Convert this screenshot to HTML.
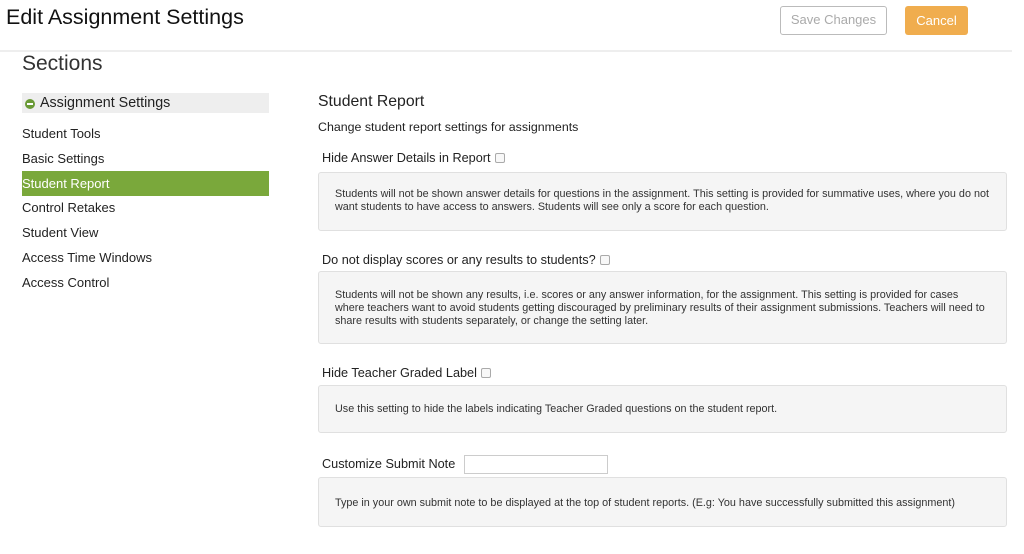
<!DOCTYPE html>
<html><head><style>
*{margin:0;padding:0;box-sizing:border-box}
body{width:1024px;height:554px;background:#fff;font-family:"Liberation Sans",sans-serif;color:#222;position:relative;overflow:hidden}
.a{position:absolute}
h1{position:absolute;left:6px;top:5px;font-size:21.5px;font-weight:normal;color:#111}
.hr{left:0;top:50px;width:1012px;height:2px;background:#eee}
.btn{border-radius:3px;font-size:13px;text-align:center;line-height:26px}
.nav{left:22px;font-size:13px;color:#222}
.box{left:318px;width:689px;background:#f5f5f5;border:1px solid #e0e0e0;border-radius:3px;font-size:10.8px;line-height:13px;color:#333;padding:0 16px}
.lbl{left:322px;font-size:12.7px;color:#222}
.cb{display:inline-block;width:10px;height:10px;border:1px solid #aaa;border-radius:2px;background:#f8f8f8;vertical-align:-1px;margin-left:4px}
</style></head><body>
<h1>Edit Assignment Settings</h1>
<div class="a btn" style="left:780px;top:6px;width:107px;height:29px;border:1px solid #bbb;color:#aaa">Save Changes</div>
<div class="a btn" style="left:905px;top:6px;width:63px;height:29px;background:#f0ad4e;color:#fff;line-height:29px">Cancel</div>
<div class="a hr"></div>
<div class="a" style="left:22px;top:52px;font-size:21px;color:#333">Sections</div>
<div class="a" style="left:22px;top:93px;width:247px;height:20px;background:#eee"></div>
<div class="a" style="left:25px;top:99px;width:10px;height:10px;border-radius:50%;background:#6a9a36"><div style="position:absolute;left:2px;top:4px;width:6px;height:2px;background:#fff"></div></div>
<div class="a" style="left:40px;top:95px;font-size:14.3px;color:#222">Assignment Settings</div>
<div class="a nav" style="top:126px">Student Tools</div>
<div class="a nav" style="top:151px">Basic Settings</div>
<div class="a" style="left:22px;top:171px;width:247px;height:25px;background:#7aa83b"></div>
<div class="a nav" style="top:176px;color:#fff">Student Report</div>
<div class="a nav" style="top:200px">Control Retakes</div>
<div class="a nav" style="top:225px">Student View</div>
<div class="a nav" style="top:250px">Access Time Windows</div>
<div class="a nav" style="top:275px">Access Control</div>

<div class="a" style="left:318px;top:93px;font-size:15.8px;color:#222">Student Report</div>
<div class="a" style="left:318px;top:120px;font-size:12.4px;color:#222">Change student report settings for assignments</div>

<div class="a lbl" style="top:151px">Hide Answer Details in Report<span class="cb"></span></div>
<div class="a box" style="top:172px;height:59px;padding-top:15px">Students will not be shown answer details for questions in the assignment. This setting is provided for summative uses, where you do not want students to have access to answers. Students will see only a score for each question.</div>

<div class="a lbl" style="top:253px">Do not display scores or any results to students?<span class="cb"></span></div>
<div class="a box" style="top:271px;height:73px;padding-top:17px">Students will not be shown any results, i.e. scores or any answer information, for the assignment. This setting is provided for cases where teachers want to avoid students getting discouraged by preliminary results of their assignment submissions. Teachers will need to share results with students separately, or change the setting later.</div>

<div class="a lbl" style="top:366px">Hide Teacher Graded Label<span class="cb"></span></div>
<div class="a box" style="top:385px;height:48px;padding-top:17px">Use this setting to hide the labels indicating Teacher Graded questions on the student report.</div>

<div class="a lbl" style="top:457px">Customize Submit Note</div>
<div class="a" style="left:464px;top:455px;width:144px;height:19px;border:1px solid #ccc;background:#fff"></div>
<div class="a box" style="top:477px;height:50px;padding-top:19px">Type in your own submit note to be displayed at the top of student reports. (E.g: You have successfully submitted this assignment)</div>
</body></html>
